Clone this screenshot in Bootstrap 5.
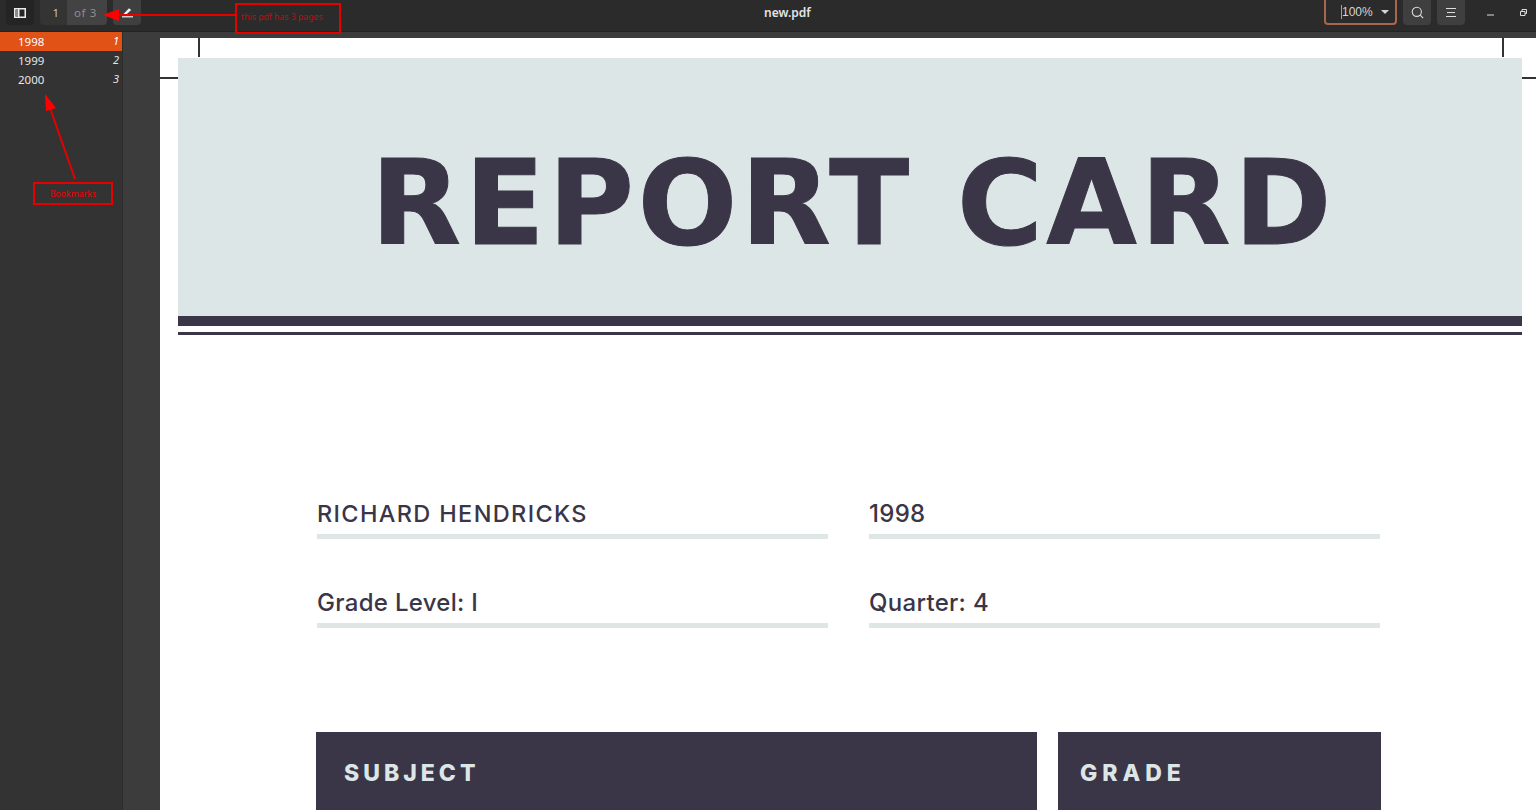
<!DOCTYPE html>
<html lang="en">
<head>
  <meta charset="UTF-8" />
  <meta name="viewport" content="width=device-width, initial-scale=1" />
  <title>new.pdf</title>
  <link href="https://cdn.jsdelivr.net/npm/bootstrap@5.3.0/dist/css/bootstrap.min.css" rel="stylesheet">
  <style>
    body {
      width: 1536px;
      height: 810px;
      overflow: hidden;
      background-color: #3c3c3c;
      font-family: "Noto Sans", "Liberation Sans", sans-serif;
    }
    .viewer { height: 810px; }
    .topbar {
      height: 32px;
      flex: none;
      background-color: #2b2b2b;
      border-bottom: 1px solid #232323;
      color: #ddd;
      padding-left: 6px;
      padding-right: 9px;
    }
    .tool-btn {
      width: 28px;
      height: 25px;
      border-radius: 0 0 4px 4px;
      background-color: #3f3f3f;
    }
    .tool-btn.sidebar-btn { background-color: #242424; }
    .tool-btn.search-btn { margin-right: 6px; }
    .page-box {
      width: 67px;
      height: 25px;
      margin-left: 6px;
      margin-right: 6px;
      border-radius: 0 0 4px 4px;
      overflow: hidden;
      font-size: 11.5px;
    }
    .page-num { width: 27px; background-color: #343434; padding-right: 8px; color: #c4c4c4; }
    .page-of { flex: 1; background-color: #434343; color: #8e8e8e; letter-spacing: .6px; padding-right: 3px; }
    .doc-title { font-size: 12px; font-weight: 600; line-height: 25px; color: #e4e4e4; margin-left: 623px; }
    .zoom-box {
      width: 73px;
      height: 25px;
      margin-right: 6px;
      border: 2px solid #a8664c;
      border-top: 0;
      border-radius: 0 0 4px 4px;
      font-family: "Liberation Sans", sans-serif;
      font-size: 12px;
      color: #d5d5d5;
      padding-left: 15px;
    }
    .zoom-text { border-left: 1px solid #8ea2c4; line-height: 14px; }
    .zoom-caret {
      width: 0;
      height: 0;
      margin-left: 8px;
      border-left: 4px solid transparent;
      border-right: 4px solid transparent;
      border-top: 4px solid #d5d5d5;
    }
    .win-min { width: 29px; height: 25px; }
    .win-max { width: 33px; height: 25px; }
    .viewer-main { min-height: 0; }
    .outline {
      width: 123px;
      flex: none;
      background-color: #333;
      border-right: 1px solid #2d2d2d;
      font-size: 11.5px;
      color: #e6e6e6;
    }
    .outline-item { height: 19px; padding: 0 3px 0 18px; }
    .outline-item.active { background-color: #e05216; color: #fff; }
    .outline-item i { font-size: 11px; }
    .canvas { padding: 6px 0 0 37px; background-color: #3c3c3c; min-width: 0; }
    .pdf-page {
      position: relative;
      background-color: #fff;
      padding: 20px 14px 0 18px;
      color: #3b3647;
      font-family: Inter, "Open Sans", sans-serif;
      height: 800px;
    }
    .crop-v { position: absolute; top: 0; width: 2px; height: 19px; background-color: #333; }
    .crop-h { position: absolute; top: 39px; height: 2px; background-color: #333; }
    .banner {
      height: 258px;
      padding-top: 32px;
      padding-left: 6px;
      background-color: #dde6e7;
      font-family: "DejaVu Sans", sans-serif;
      font-size: 117px;
      font-weight: 700;
      line-height: 1;
      letter-spacing: 3.6px;
      -webkit-text-stroke: 1px #3b3647;
    }
    .rule-thick { height: 10px; background-color: #3b3647; }
    .rule-thin { height: 3px; margin-top: 6px; background-color: #3b3647; }
    .info-area { padding: 0 142px 0 139px; }
    .info-row { height: 89px; }
    .info-cell { width: 511px; border-bottom: 5px solid #dfe7e6; height: 50px; padding-top: 7px; font-size: 24px; font-weight: 500; letter-spacing: .3px; }
    .info-row.first { margin-top: 154px; }
    .info-cell.name { font-size: 23.5px; letter-spacing: 1.35px; }
    .table-head { margin-top: 65px; padding: 0 141px 0 138px; }
    .head-cell {
      height: 100px;
      padding-top: 27px;
      background-color: #3b3647;
      color: #dde6e7;
      font-size: 23px;
      font-weight: 800;
      line-height: 28px;
      letter-spacing: 4px;
    }
    .head-subject { width: 721px; padding-left: 28px; }
    .head-grade { width: 323px; padding-left: 22px; letter-spacing: 5px; }
    .note {
      position: absolute;
      border: 2px solid #e60000;
      color: #ee0000;
      font-size: 8.7px;
      font-family: "Noto Sans", sans-serif;
      line-height: 1;
    }
    .note-pages { left: 235px; top: 3px; width: 106px; height: 31px; padding: 8px 0 0 4px; color: #bc0e0e; }
    .note-marks { left: 33px; top: 182px; width: 80px; height: 23px; padding-top: 6px; text-align: center; }
    .arrows { position: absolute; left: 0; top: 0; pointer-events: none; }
  </style>
</head>
<body>

<div class="viewer d-flex flex-column position-relative">
  <div class="topbar d-flex align-items-start">
    <div class="tool-btn sidebar-btn d-flex align-items-center justify-content-center">
      <svg width="12" height="10" viewBox="0 0 12 10"><rect x=".75" y=".75" width="10.5" height="8.5" fill="none" stroke="#ececec" stroke-width="1.5"/><path d="M4.75 1v8" stroke="#ececec" stroke-width="1.5"/><rect x="1.5" y="1.5" width="2.5" height="7" fill="#8a8a8a"/></svg>
    </div>
    <div class="page-box d-flex">
      <div class="page-num d-flex align-items-center justify-content-end">1</div>
      <div class="page-of d-flex align-items-center justify-content-center">of 3</div>
    </div>
    <div class="tool-btn d-flex align-items-center justify-content-center">
      <svg width="13" height="11" viewBox="0 0 13 11"><path d="M2 7.5 8 1.2l2.2 1.9-6 5.4H2z" fill="#eee"/><path d="M1 9.8h11" stroke="#eee" stroke-width="1.2"/></svg>
    </div>
    <div class="doc-title">new.pdf</div>
    <div class="ms-auto d-flex align-items-start">
      <div class="zoom-box d-flex align-items-center"><span class="zoom-text">100%</span><span class="zoom-caret"></span></div>
      <div class="tool-btn search-btn d-flex align-items-center justify-content-center">
        <svg width="13" height="13" viewBox="0 0 13 13"><circle cx="5.8" cy="5.8" r="4.6" fill="none" stroke="#ddd" stroke-width="1.1"/><path d="m9.2 9.2 3 3" stroke="#ddd" stroke-width="1.1"/></svg>
      </div>
      <div class="tool-btn d-flex align-items-center justify-content-center">
        <svg width="10" height="9" viewBox="0 0 10 9"><path d="M0 .5h10M1 4.5h8M0 8.5h10" stroke="#ddd" stroke-width="1"/></svg>
      </div>
      <div class="win-min d-flex justify-content-end align-items-center">
        <svg width="7" height="8" viewBox="0 0 7 8"><path d="M0 6h7" stroke="#ddd" stroke-width="1"/></svg>
      </div>
      <div class="win-max d-flex justify-content-end align-items-center">
        <svg width="7" height="7" viewBox="0 0 7 7"><path d="M.5 2.5h4.5v4H.5zM2 2.5V.5h4.5v4H5" fill="none" stroke="#ddd" stroke-width="1"/></svg>
      </div>
    </div>
  </div>

  <div class="viewer-main d-flex flex-grow-1">
    <div class="outline">
      <div class="outline-item active d-flex justify-content-between align-items-center"><span>1998</span><i>1</i></div>
      <div class="outline-item d-flex justify-content-between align-items-center"><span>1999</span><i>2</i></div>
      <div class="outline-item d-flex justify-content-between align-items-center"><span>2000</span><i>3</i></div>
    </div>
    <div class="canvas flex-grow-1">
      <div class="pdf-page">
        <div class="crop-v" style="left: 38px"></div>
        <div class="crop-v" style="left: 1342px"></div>
        <div class="crop-h" style="left: 0; width: 18px"></div>
        <div class="crop-h" style="right: 0; width: 14px"></div>

        <div class="banner d-flex align-items-center justify-content-center">REPORT CARD</div>
        <div class="rule-thick"></div>
        <div class="rule-thin"></div>

        <div class="info-area">
          <div class="info-row first d-flex justify-content-between">
            <div class="info-cell name">RICHARD HENDRICKS</div>
            <div class="info-cell">1998</div>
          </div>
          <div class="info-row d-flex justify-content-between">
            <div class="info-cell">Grade Level: I</div>
            <div class="info-cell">Quarter: 4</div>
          </div>
        </div>

        <div class="table-head d-flex justify-content-between">
          <div class="head-cell head-subject">SUBJECT</div>
          <div class="head-cell head-grade">GRADE</div>
        </div>
      </div>
    </div>
  </div>

  <!-- red annotations drawn on top of the screenshot -->
  <svg class="arrows" width="1536" height="810" viewBox="0 0 1536 810">
    <path d="M235 15H118" stroke="#e60000" stroke-width="2"/>
    <path d="M103 15l16-6v12z" fill="#f00"/>
    <path d="M75 179 50 108" stroke="#e60000" stroke-width="2"/>
    <path d="M45 94l11 14-10 3z" fill="#f00"/>
  </svg>
  <div class="note note-pages">this pdf has 3 pages</div>
  <div class="note note-marks">Bookmarks</div>
</div>

<script src="https://cdn.jsdelivr.net/npm/bootstrap@5.3.0/dist/js/bootstrap.bundle.min.js"></script>
</body>
</html>
